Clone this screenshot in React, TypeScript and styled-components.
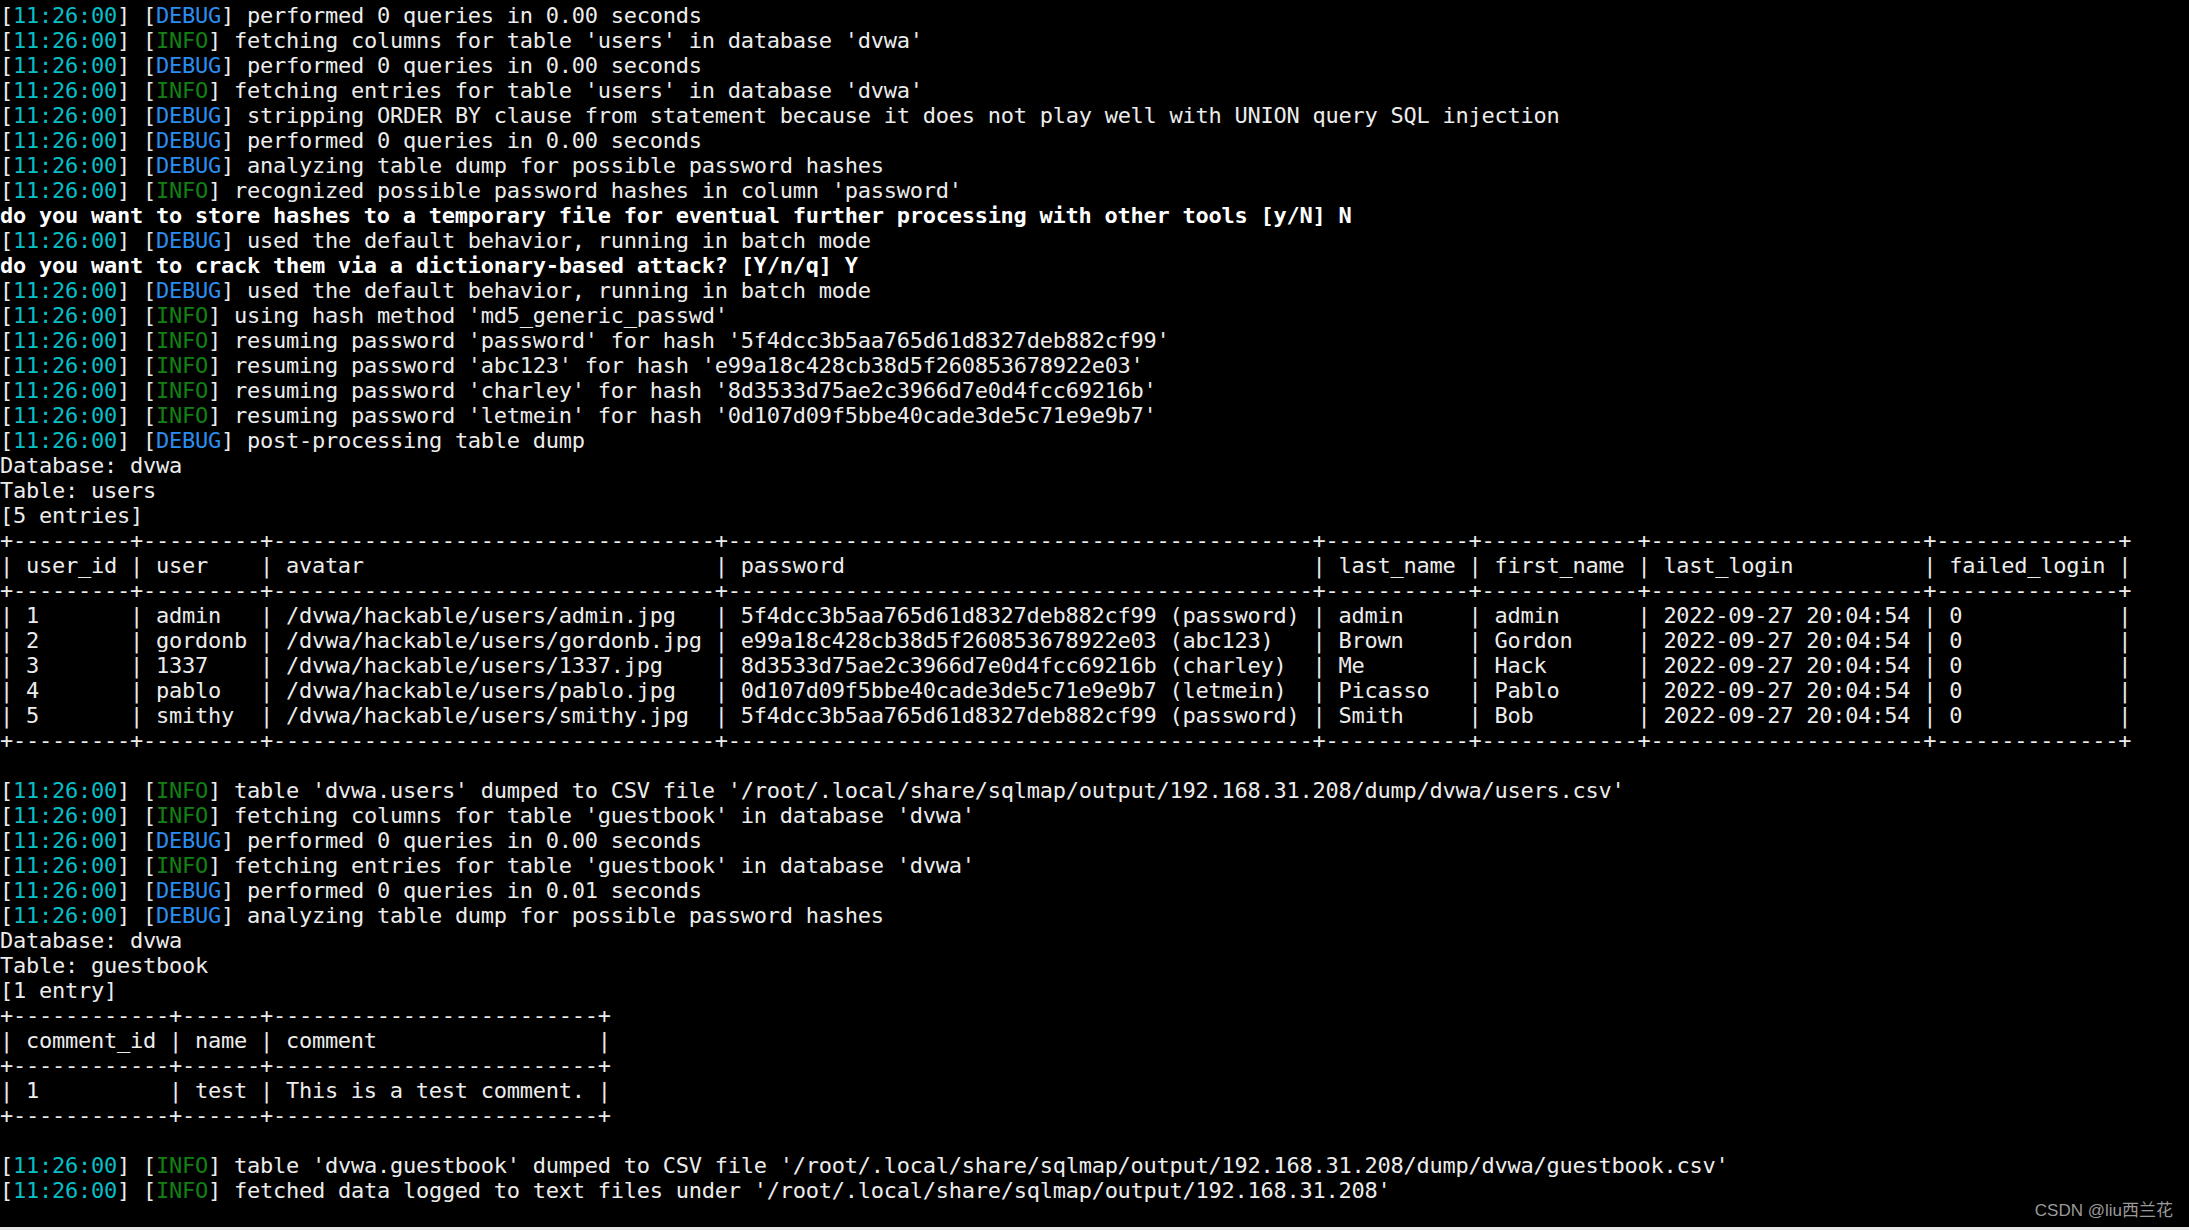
import React from "react";
import styled, { createGlobalStyle } from "styled-components";

const GlobalStyle = createGlobalStyle`
  html, body {
    margin: 0;
    padding: 0;
    background: #000;
  }
  body {
    width: 2189px;
    height: 1230px;
    overflow: hidden;
  }
`;

const Page = styled.div`
  position: relative;
  width: 2189px;
  height: 1230px;
  display: flex;
  flex-direction: column;
  background: #000;
`;

const Terminal = styled.div`
  flex: 1;
  display: flex;
  flex-direction: column;
  padding: 3px 0 0 0;
  font-family: "DejaVu Sans Mono", monospace;
  font-size: 22px;
  letter-spacing: -0.25px;
  color: #ececec;
  overflow: hidden;
`;

const Line = styled.div<{ $bold?: boolean }>`
  height: 25px;
  line-height: 25px;
  white-space: pre;
  font-weight: ${(p) => (p.$bold ? 700 : 400)};
  color: ${(p) => (p.$bold ? "#ffffff" : "#ececec")};
`;

const Time = styled.span`
  color: #07bfc6;
`;

const Level = styled.span<{ $kind: "DEBUG" | "INFO" }>`
  color: ${(p) => (p.$kind === "DEBUG" ? "#2a8ef0" : "#138013")};
`;

const BottomStrip = styled.div`
  height: 3px;
  background: #e6e6e6;
`;

const Watermark = styled.div`
  position: absolute;
  right: 16px;
  bottom: 9px;
  font-family: "Liberation Sans", "Noto Sans CJK SC", sans-serif;
  font-size: 17px;
  color: #9a9a9a;
  white-space: nowrap;
`;

type Entry =
  | { t: "log"; level: "DEBUG" | "INFO"; msg: string }
  | { t: "bold"; msg: string }
  | { t: "plain"; msg: string };

const D = (msg: string): Entry => ({ t: "log", level: "DEBUG", msg });
const I = (msg: string): Entry => ({ t: "log", level: "INFO", msg });
const B = (msg: string): Entry => ({ t: "bold", msg });
const P = (msg: string): Entry => ({ t: "plain", msg });

function table(widths: number[], header: string[], rows: string[][]): Entry[] {
  const border = "+" + widths.map((w) => "-".repeat(w + 2)).join("+") + "+";
  const row = (cells: string[]) =>
    "| " + cells.map((c, i) => c.padEnd(widths[i], " ")).join(" | ") + " |";
  return [P(border), P(row(header)), P(border), ...rows.map((r) => P(row(r))), P(border)];
}

const usersTable = table(
  [7, 7, 32, 43, 9, 10, 19, 12],
  ["user_id", "user", "avatar", "password", "last_name", "first_name", "last_login", "failed_login"],
  [
    ["1", "admin", "/dvwa/hackable/users/admin.jpg", "5f4dcc3b5aa765d61d8327deb882cf99 (password)", "admin", "admin", "2022-09-27 20:04:54", "0"],
    ["2", "gordonb", "/dvwa/hackable/users/gordonb.jpg", "e99a18c428cb38d5f260853678922e03 (abc123)", "Brown", "Gordon", "2022-09-27 20:04:54", "0"],
    ["3", "1337", "/dvwa/hackable/users/1337.jpg", "8d3533d75ae2c3966d7e0d4fcc69216b (charley)", "Me", "Hack", "2022-09-27 20:04:54", "0"],
    ["4", "pablo", "/dvwa/hackable/users/pablo.jpg", "0d107d09f5bbe40cade3de5c71e9e9b7 (letmein)", "Picasso", "Pablo", "2022-09-27 20:04:54", "0"],
    ["5", "smithy", "/dvwa/hackable/users/smithy.jpg", "5f4dcc3b5aa765d61d8327deb882cf99 (password)", "Smith", "Bob", "2022-09-27 20:04:54", "0"],
  ]
);

const guestTable = table(
  [10, 4, 23],
  ["comment_id", "name", "comment"],
  [["1", "test", "This is a test comment."]]
);

const lines: Entry[] = [
  D("performed 0 queries in 0.00 seconds"),
  I("fetching columns for table 'users' in database 'dvwa'"),
  D("performed 0 queries in 0.00 seconds"),
  I("fetching entries for table 'users' in database 'dvwa'"),
  D("stripping ORDER BY clause from statement because it does not play well with UNION query SQL injection"),
  D("performed 0 queries in 0.00 seconds"),
  D("analyzing table dump for possible password hashes"),
  I("recognized possible password hashes in column 'password'"),
  B("do you want to store hashes to a temporary file for eventual further processing with other tools [y/N] N"),
  D("used the default behavior, running in batch mode"),
  B("do you want to crack them via a dictionary-based attack? [Y/n/q] Y"),
  D("used the default behavior, running in batch mode"),
  I("using hash method 'md5_generic_passwd'"),
  I("resuming password 'password' for hash '5f4dcc3b5aa765d61d8327deb882cf99'"),
  I("resuming password 'abc123' for hash 'e99a18c428cb38d5f260853678922e03'"),
  I("resuming password 'charley' for hash '8d3533d75ae2c3966d7e0d4fcc69216b'"),
  I("resuming password 'letmein' for hash '0d107d09f5bbe40cade3de5c71e9e9b7'"),
  D("post-processing table dump"),
  P("Database: dvwa"),
  P("Table: users"),
  P("[5 entries]"),
  ...usersTable,
  P(""),
  I("table 'dvwa.users' dumped to CSV file '/root/.local/share/sqlmap/output/192.168.31.208/dump/dvwa/users.csv'"),
  I("fetching columns for table 'guestbook' in database 'dvwa'"),
  D("performed 0 queries in 0.00 seconds"),
  I("fetching entries for table 'guestbook' in database 'dvwa'"),
  D("performed 0 queries in 0.01 seconds"),
  D("analyzing table dump for possible password hashes"),
  P("Database: dvwa"),
  P("Table: guestbook"),
  P("[1 entry]"),
  ...guestTable,
  P(""),
  I("table 'dvwa.guestbook' dumped to CSV file '/root/.local/share/sqlmap/output/192.168.31.208/dump/dvwa/guestbook.csv'"),
  I("fetched data logged to text files under '/root/.local/share/sqlmap/output/192.168.31.208'"),
];

function renderEntry(e: Entry, i: number) {
  if (e.t === "log") {
    return (
      <Line key={i}>
        [<Time>11:26:00</Time>] [<Level $kind={e.level}>{e.level}</Level>] {e.msg}
      </Line>
    );
  }
  if (e.t === "bold") {
    return (
      <Line key={i} $bold>
        {e.msg}
      </Line>
    );
  }
  return <Line key={i}>{e.msg}</Line>;
}

export default function App() {
  return (
    <>
      <GlobalStyle />
      <Page>
        <Terminal>{lines.map(renderEntry)}</Terminal>
        <BottomStrip />
        <Watermark>CSDN @liu西兰花</Watermark>
      </Page>
    </>
  );
}
